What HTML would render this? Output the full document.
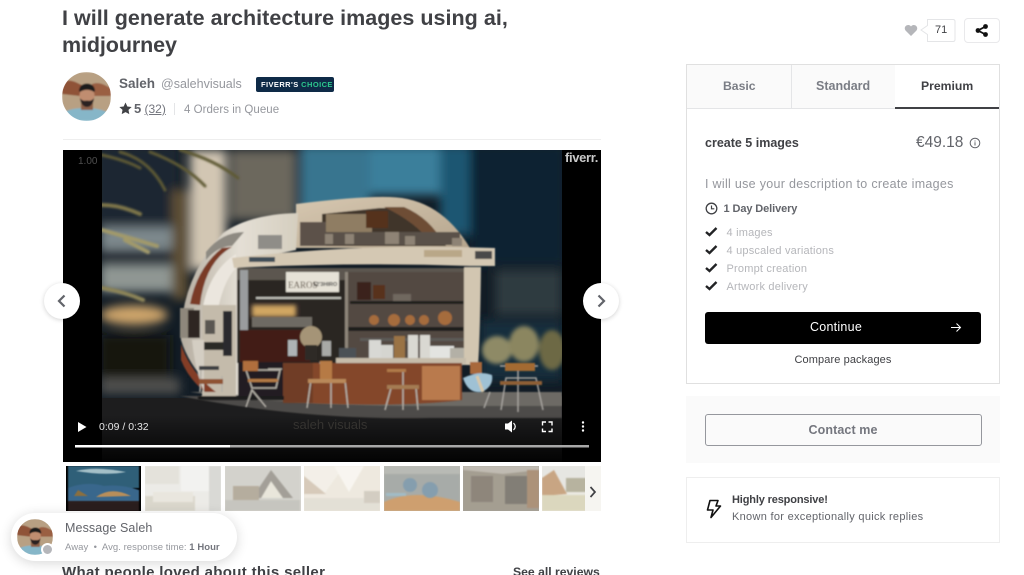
<!DOCTYPE html>
<html><head><meta charset="utf-8">
<style>
html,body{margin:0;padding:0;background:#fff;width:1024px;height:575px;overflow:hidden;font-family:"Liberation Sans",sans-serif}
#w{position:relative;width:1024px;height:575px;overflow:hidden;background:#fff}
.a{position:absolute;white-space:nowrap}
.box{position:absolute;box-sizing:border-box}
svg{position:absolute;overflow:hidden}
.thumb{position:absolute;top:466px;height:45px;width:76px;overflow:hidden}
.thumb svg{filter:blur(.8px);opacity:.85}
</style></head><body><div id="w">
<div class="a" style="left:62px;top:5px;font-size:21.500px;line-height:27px;font-weight:700;color:#404145;letter-spacing:.03px">I will generate architecture images using ai,</div>
<div class="a" style="left:62px;top:32px;font-size:21.500px;line-height:27px;font-weight:700;color:#404145;letter-spacing:-.1px">midjourney</div>

<svg style="left:62px;top:72px" width="49" height="49" viewBox="0 0 49 49"><defs><clipPath id="c1"><circle cx="24.500" cy="24.500" r="24.500"/></clipPath><filter id="b1"><feGaussianBlur stdDeviation=".7"/></filter></defs><g clip-path="url(#c1)" filter="url(#b1)"><rect width="49" height="49" fill="#b8a083"/><path d="M0 10C10 6 16 12 22 14L18 24L0 22Z" fill="#8f5238"/><path d="M30 12C38 9 44 14 49 16V24H32Z" fill="#9a5f42"/><path d="M0 41C8 37 14 36 24 36C34 36 42 38 49 42V49H0Z" fill="#86b6c8"/><rect x="19" y="30" width="12" height="8" fill="#8d6048"/><ellipse cx="25" cy="24" rx="7.500" ry="10" fill="#c08d70"/><path d="M17 19C17 9 33 9 33 19L32 20C28 17 22 17 18 20Z" fill="#1e1a1c"/><path d="M18 26C19 38 31 38 32 26C30 29 27 29 25 28.500C23 29 20 29 18 26Z" fill="#2a2123"/></g></svg>

<div class="a" style="left:119px;top:75px;font-size:13.500px;line-height:18px;font-weight:700;color:#62646a">Saleh</div>
<div class="a" style="left:161px;top:76px;font-size:12.500px;line-height:17px;color:#95979d">@salehvisuals</div>
<div class="box" style="left:256px;top:77px;width:78px;height:15px;background:#0e2a47;border-radius:2px"></div>
<div class="a" style="left:261px;top:79px;font-size:7.500px;line-height:11px;font-weight:700;color:#fff;letter-spacing:.42px">FIVERR'S <span style="color:#2cc78d">CHOICE</span></div>

<svg style="left:119px;top:102px" width="13" height="13" viewBox="0 0 24 24"><path d="M12 1l3.400 7.200 7.900 1-5.800 5.400 1.500 7.800L12 18.600 5 22.400l1.500-7.800L.7 9.200l7.900-1z" fill="#404145"/></svg>
<div class="a" style="left:134px;top:101px;font-size:13px;line-height:16px;font-weight:700;color:#62646a">5</div>
<div class="a" style="left:144.500px;top:101px;font-size:12px;line-height:16px;color:#74767e;text-decoration:underline">(32)</div>
<div class="box" style="left:174px;top:103px;width:1px;height:12px;background:#e4e5e7"></div>
<div class="a" style="left:184px;top:103px;font-size:11.500px;line-height:15px;color:#95979d;letter-spacing:.03px">4 Orders in Queue</div>

<div class="box" style="left:63px;top:139px;width:538px;height:1px;background:#eeeeee"></div>

<svg style="left:63px;top:150px" width="538" height="312" viewBox="63 150 538 312">
<defs>
<filter id="bl" x="-20%" y="-20%" width="140%" height="140%"><feGaussianBlur stdDeviation="5"/></filter>
<filter id="bs" x="-20%" y="-20%" width="140%" height="140%"><feGaussianBlur stdDeviation="2"/></filter>
<filter id="bf" x="-20%" y="-20%" width="140%" height="140%"><feGaussianBlur stdDeviation="1"/></filter>
<filter id="bt" x="-20%" y="-20%" width="140%" height="140%"><feGaussianBlur stdDeviation=".8"/></filter>
<linearGradient id="fade" x1="0" y1="0" x2="0" y2="1"><stop offset="0" stop-color="#000" stop-opacity="0"/><stop offset="1" stop-color="#000" stop-opacity=".9"/></linearGradient>
<linearGradient id="dome" x1="0" y1="0" x2="1" y2="1"><stop offset="0" stop-color="#d6c7b0"/><stop offset="1" stop-color="#b5a58d"/></linearGradient>
<linearGradient id="bodyg" x1="0" y1="0" x2="1" y2="0"><stop offset="0" stop-color="#b5ada0"/><stop offset=".5" stop-color="#e4dfd5"/><stop offset="1" stop-color="#d5cebf"/></linearGradient>
</defs>
<rect x="63" y="150" width="538" height="312" fill="#000"/>
<g>
<rect x="102" y="150" width="460" height="312" fill="#121c25"/>
<g filter="url(#bl)">
<rect x="95" y="145" width="85" height="78" fill="#1b2730"/>
<rect x="100" y="226" width="72" height="24" fill="#7d888c"/>
<rect x="100" y="250" width="72" height="10" fill="#151f2c"/>
<rect x="100" y="264" width="72" height="28" fill="#8f9693"/>
<rect x="172" y="190" width="16" height="110" fill="#5f4f36"/>
<rect x="190" y="150" width="36" height="120" fill="#d2c6b3"/>
<rect x="230" y="150" width="66" height="70" fill="#6c675d"/>
<rect x="300" y="145" width="70" height="70" fill="#37758f"/>
<rect x="370" y="145" width="70" height="50" fill="#3a7f9b"/>
<rect x="440" y="145" width="30" height="90" fill="#1b5772"/>
<rect x="470" y="145" width="95" height="120" fill="#0f2230"/>
<rect x="495" y="270" width="67" height="45" fill="#2f3b40"/>
<rect x="480" y="320" width="82" height="60" fill="#152d3d"/>
<ellipse cx="134" cy="315" rx="34" ry="10" fill="#cda46a"/>
<rect x="100" y="335" width="70" height="45" fill="#191511"/>
<rect x="100" y="378" width="80" height="16" fill="#4f4f4e"/>
</g>
<g filter="url(#bf)" fill="none" stroke-linecap="round">
<path d="M102 155Q125 160 140 168M120 152Q150 160 165 190M150 152Q185 165 205 186M180 150Q215 160 238 178" stroke="#5f5a34" stroke-width="3"/>
<path d="M102 205Q120 205 140 214" stroke="#7d7548" stroke-width="4"/>
<path d="M102 230Q130 238 157 246M125 240L148 252" stroke="#a29a6a" stroke-width="4"/>
<path d="M102 288Q125 292 143 300" stroke="#8c8459" stroke-width="4"/>
</g>
<g filter="url(#bs)">
<ellipse cx="497" cy="350" rx="15" ry="14" fill="#8e8a66"/>
<ellipse cx="524" cy="344" rx="15" ry="18" fill="#8b8660"/>
<ellipse cx="552" cy="350" rx="13" ry="20" fill="#6d6945"/>
</g>
<rect x="102" y="398" width="460" height="64" fill="#1d1d1e"/>
<path d="M180 396H562V418H430C350 420 260 412 180 396Z" fill="#4e4c48" filter="url(#bt)"/>
<path d="M190 392H562V406H400Q280 404 190 392Z" fill="#6d6b65" filter="url(#bt)"/>
<g filter="url(#bt)">
<!-- dome right -->
<path d="M296 204Q360 196 390 197Q440 198 470 248H296Z" fill="url(#dome)"/>
<path d="M322 214L380 208H402Q432 222 446 246H322Z" fill="#3f342b"/>
<path d="M384 207H404Q430 218 444 244H432Q416 222 384 207Z" fill="#6e4e34"/>
<rect x="326" y="214" width="46" height="18" fill="#8f7d63"/>
<rect x="366" y="211" width="22" height="17" fill="#54331f"/>
<rect x="300" y="232" width="160" height="13" fill="#5a5148"/>
<rect x="300" y="222" width="26" height="24" fill="#5b5148"/>
<g fill="#8e8374"><rect x="325" y="234" width="8" height="10"/><rect x="345" y="234" width="9" height="10"/><rect x="385" y="232" width="14" height="12"/><rect x="405" y="236" width="10" height="9"/><rect x="452" y="238" width="10" height="8"/></g>
<!-- left body -->
<path d="M181 340Q180 280 223 233Q250 214 298 213L296 250L238 262V395H220Q190 370 181 340Z" fill="url(#bodyg)"/>
<path d="M206 252Q222 232 244 232L232 246Q218 246 206 260Z" fill="#8e8a82"/>
<path d="M190 304Q197 268 222 248L232 247Q205 262 200 305Z" fill="#7a3b25"/>
<path d="M202 312Q208 272 236 254L236 268Q222 282 216 320L202 320Z" fill="#ebe6de"/>
<rect x="180" y="308" width="14" height="30" fill="#8e877c"/>
<rect x="188" y="310" width="12" height="28" fill="#2d2824"/>
<rect x="202" y="305" width="34" height="92" fill="#c4bbab"/>
<rect x="223" y="311" width="9" height="45" fill="#2a2a2d"/>
<rect x="205" y="320" width="10" height="14" fill="#5a5751"/>
<rect x="203" y="342" width="20" height="8" fill="#2c2a28"/>
<path d="M181 344Q190 372 216 392H205Q188 378 181 360Z" fill="#833d26"/>
<path d="M192 340H204V392Q195 370 192 340Z" fill="#d4cec3"/>
<rect x="258" y="235" width="24" height="14" fill="#8f8d88"/>
<!-- roof band -->
<path d="M232 258Q360 243 495 248L495 266H470Q350 262 234 268Z" fill="#d4c8b3"/>
<rect x="424" y="250" width="38" height="7" fill="#b9a788"/>
<rect x="475" y="251" width="17" height="8" fill="#4a4a48"/>
<rect x="249" y="257" width="26" height="5" fill="#3f4e58"/>
<!-- windows -->
<rect x="237" y="268" width="234" height="95" fill="#2c2524"/>
<rect x="237" y="268" width="234" height="12" fill="#5b5750"/>
<rect x="345" y="272" width="124" height="88" fill="#524a42"/>
<rect x="252" y="305" width="44" height="12" fill="#d0a662" filter="url(#bs)"/>
<rect x="252" y="317" width="60" height="10" fill="#6e6a64"/>
<rect x="240" y="330" width="70" height="32" fill="#431f18"/>
<rect x="240" y="270" width="8" height="60" fill="#9a9c9e"/>
<rect x="256" y="297" width="85" height="2" fill="#bfc0b8"/>
<rect x="286" y="272" width="53" height="20" fill="#e6e2d7"/>
<text x="288" y="288" font-family="Liberation Serif,serif" font-size="9" fill="#4a3a2c">EAROS</text>
<text x="313" y="286" font-family="Liberation Sans,sans-serif" font-size="5.500" font-weight="700" fill="#3a3a3a">12'3HIRO</text>
<rect x="350" y="301" width="125" height="3" fill="#1e1c1b"/>
<rect x="346" y="327" width="126" height="4" fill="#1e1c1b"/>
<rect x="360" y="338" width="108" height="3" fill="#5c5a57"/>
<rect x="345" y="272" width="3" height="90" fill="#8e867a"/>
<g fill="#a56c3c"><circle cx="374" cy="320" r="5"/><circle cx="394" cy="320" r="6"/><circle cx="410" cy="320" r="5"/><circle cx="424" cy="320" r="5"/><circle cx="445" cy="318" r="7"/></g>
<rect x="357" y="282" width="14" height="18" fill="#3a241c"/><rect x="373" y="285" width="12" height="14" fill="#59311f"/>
<rect x="393" y="294" width="18" height="7" fill="#70685f"/>
<circle cx="311" cy="337" r="11" fill="#a59477"/>
<rect x="305" y="345" width="12" height="15" fill="#2d2b28"/>
<rect x="288" y="340" width="9" height="16" fill="#aeb3b5"/><rect x="322" y="341" width="9" height="15" fill="#a8a9a6"/>
<rect x="339" y="348" width="17" height="12" fill="#4c5156"/><rect x="369" y="340" width="12" height="20" fill="#d8d8d4"/><rect x="381" y="345" width="12" height="14" fill="#d5d5d0"/>
<rect x="394" y="336" width="11" height="22" fill="#9a7344"/><rect x="408" y="335" width="10" height="24" fill="#d9d8d2"/><rect x="420" y="335" width="10" height="24" fill="#d9d8d2"/><rect x="430" y="346" width="24" height="14" fill="#e3e4e1"/><rect x="450" y="348" width="16" height="12" fill="#b3b0a6"/>
<!-- right column -->
<path d="M464 267H481Q480 340 478 365H464Z" fill="#d2c6b1"/>
<!-- counter -->
<rect x="336" y="358" width="130" height="7" fill="#c6bcaa"/>
<path d="M283 363H462L462 400Q400 408 283 402Z" fill="#84462c"/>
<rect x="422" y="366" width="38" height="34" fill="#b97a4e"/>
<rect x="283" y="363" width="30" height="40" fill="#6f3d27"/>
<rect x="238" y="362" width="45" height="34" fill="#211f20"/>
<rect x="198" y="396" width="86" height="4" fill="#1d1c1c"/>
<!-- chairs -->
<g stroke="#b5b1a8" stroke-width="1.500" fill="none">
<path d="M200 392L201 368M222 392V376M246 407L252 390L266 407M268 369H282"/>
<path d="M246 370H280L276 388H252Z"/>
<path d="M307 408L311 380H345L348 408M331 380V408M320 362L325 378"/>
<path d="M385 410L391 388H416L418 410M403 370V410"/>
</g>
<rect x="199" y="379" width="24" height="5" fill="#8f5233"/><rect x="199" y="366" width="20" height="4" fill="#3c4143"/>
<rect x="248" y="379" width="30" height="3" fill="#b47a45"/><rect x="243" y="361" width="15" height="10" fill="#b06e3c"/>
<rect x="308" y="379" width="38" height="4" fill="#b9895a"/><rect x="320" y="361" width="12" height="18" fill="#b67a45"/>
<rect x="387" y="385" width="32" height="4" fill="#a47c52"/><rect x="387" y="369" width="19" height="3" fill="#b07a4a"/>
<rect x="470" y="362" width="12" height="12" fill="#a8683a"/>
<path d="M463 378Q480 370 492 375Q494 386 482 392Q468 394 463 378Z" fill="#9fc1d4"/>
<path d="M477 376L483 392" stroke="#d9c7a8" stroke-width="3"/>
<g stroke="#a8a5a0" stroke-width="1.500" fill="none"><path d="M500 366H538M518 367V412M501 410L506 378H536L543 410M484 408L490 392"/></g>
<rect x="505" y="363" width="30" height="8" fill="#a36a33"/><rect x="500" y="381" width="42" height="4" fill="#8f5f34"/>
</g>
</g>
<rect x="102" y="415" width="460" height="47" fill="url(#fade)"/>
<rect x="63" y="150" width="39" height="312" fill="#000"/>
<rect x="562" y="150" width="39" height="312" fill="#000"/>
<text x="78" y="164" font-family="Liberation Sans,sans-serif" font-size="10" fill="#4e4e4e">1.00</text>
<text x="565" y="162" font-family="Liberation Sans,sans-serif" font-size="13" font-weight="700" fill="#c9c9c9" letter-spacing="-.35">fiverr.</text>
<text x="293" y="429" font-family="Liberation Sans,sans-serif" font-size="13" fill="#353330">saleh visuals</text>
<path d="M78 422L86.500 427L78 432Z" fill="#fff"/>
<text x="99" y="430" font-family="Liberation Sans,sans-serif" font-size="10.500" fill="#e6e6e6">0:09 / 0:32</text>
<rect x="75" y="445" width="514" height="2.500" fill="#a8a8a8"/>
<rect x="75" y="445" width="155" height="2.500" fill="#fff"/>
<path d="M505 423.500H508L512 420.500V432.500L508 429.500H505Z" fill="#fff"/>
<path d="M513.500 423Q517 426.500 513.500 430" stroke="#fff" stroke-width="1.200" fill="none"/>
<path d="M542.500 425.500V422H546M548.500 422H552V425.500M552 428.500V431.500H548.500M546 431.500H542.500V428.500" stroke="#fff" stroke-width="1.400" fill="none"/>
<g fill="#fff"><circle cx="583" cy="422.500" r="1.200"/><circle cx="583" cy="426.500" r="1.200"/><circle cx="583" cy="430.500" r="1.200"/></g>
</svg>

<div class="box" style="left:44px;top:283px;width:36px;height:36px;border-radius:50%;background:#fff;box-shadow:0 1px 5px rgba(0,0,0,.18)"></div>
<svg style="left:44px;top:283px" width="36" height="36" viewBox="0 0 36 36"><path d="M20.500 12.500L15 18L20.500 23.500" stroke="#62646a" stroke-width="2.200" fill="none"/></svg>
<div class="box" style="left:583px;top:283px;width:36px;height:36px;border-radius:50%;background:#fff;box-shadow:0 1px 5px rgba(0,0,0,.18)"></div>
<svg style="left:583px;top:283px" width="36" height="36" viewBox="0 0 36 36"><path d="M15.500 12.500L21 18L15.500 23.500" stroke="#62646a" stroke-width="2.200" fill="none"/></svg>

<div class="thumb" style="left:66px;width:75px;background:#000"><svg style="filter:blur(.5px);opacity:1" width="75" height="45" viewBox="0 0 75 45"><rect x="2" width="71" height="22" fill="#2f5f78"/><path d="M10 5Q30 0 60 6Q40 10 10 5Z" fill="#a5c0c8"/><path d="M2 22Q20 15 38 20Q55 18 73 24V35H2Z" fill="#39678c"/><path d="M30 31Q45 20 65 30Z" fill="#b88e5a"/><path d="M12 24L22 30L8 30Z" fill="#8b6f3f"/><rect x="2" y="35" width="71" height="10" fill="#2a1e1e"/></svg></div>
<div class="thumb" style="left:145px;background:#ecebe7"><svg width="76" height="45" viewBox="0 0 76 45"><rect width="34" height="18" fill="#e3e1d9"/><rect x="36" width="30" height="25" fill="#f4f4f2"/><rect x="64" width="12" height="45" fill="#d6d6d2"/><path d="M0 30H50V45H0Z" fill="#d8d4c8"/><rect x="8" y="26" width="40" height="10" fill="#e9e6dd"/></svg></div>
<div class="thumb" style="left:225px;background:#d8d7d2"><svg width="75" height="45" viewBox="0 0 75 45"><rect width="75" height="45" fill="#d3d2cc"/><path d="M27 32L46 4L68 32Z" fill="#9a968e"/><path d="M36 32L46 15L58 32Z" fill="#ece9dd"/><rect x="8" y="20" width="26" height="14" fill="#b0a695"/><rect y="34" width="75" height="11" fill="#c4c3bc"/></svg></div>
<div class="thumb" style="left:304px;background:#eee9df"><svg width="76" height="45" viewBox="0 0 76 45"><path d="M0 0H40L20 28H0Z" fill="#f4f1ea"/><path d="M0 10L22 28H0Z" fill="#d3c5b4"/><path d="M30 0L45 26L60 0Z" fill="#faf8f3"/><rect y="32" width="76" height="13" fill="#e2dfd5"/><rect x="60" y="25" width="16" height="12" fill="#cfc9be"/></svg></div>
<div class="thumb" style="left:383.500px;background:#bdbcb5"><svg width="76" height="45" viewBox="0 0 76 45"><rect width="76" height="45" fill="#a4a9a6"/><rect y="0" width="76" height="8" fill="#b8bab5"/><path d="M0 36Q30 22 76 36V45H0Z" fill="#d19b63"/><circle cx="26" cy="19" r="7" fill="#7c99ad"/><circle cx="46" cy="24" r="8" fill="#7c99ad"/><rect x="2" y="27" width="20" height="3" fill="#9dbcc9"/></svg></div>
<div class="thumb" style="left:463px;background:#a8a49c"><svg width="76" height="45" viewBox="0 0 76 45"><rect width="76" height="45" fill="#a49d90"/><path d="M0 0H76V4L40 8L0 4Z" fill="#c5c0b6"/><rect x="8" y="10" width="22" height="26" fill="#8a8176"/><rect x="42" y="10" width="22" height="28" fill="#7c7870"/><rect x="64" y="4" width="12" height="38" fill="#ad8f74"/></svg></div>
<div class="thumb" style="left:542px;width:45px;background:#ebe9e2"><svg width="45" height="45" viewBox="0 0 45 45"><rect width="45" height="26" fill="#e6e6e2"/><path d="M0 30V12L12 4L25 28Z" fill="#c39a73"/><rect x="24" y="12" width="21" height="14" fill="#aeaa94"/><rect y="29" width="45" height="16" fill="#d9d5b8"/></svg></div>
<div class="box" style="left:585px;top:466px;width:16px;height:45px;background:#f6f5f1"></div>
<svg style="left:587px;top:484px" width="12" height="16" viewBox="0 0 12 16"><path d="M3.500 3L8 8L3.500 13" stroke="#404145" stroke-width="1.700" fill="none"/></svg>

<div class="a" style="left:62px;top:564px;font-size:15px;line-height:17px;font-weight:700;color:#404145;letter-spacing:.33px">What people loved about this seller</div>
<div class="a" style="left:513px;top:564px;font-size:12.200px;line-height:17px;font-weight:700;color:#404145">See all reviews</div>

<div class="box" style="left:11px;top:513px;width:226px;height:48px;border-radius:24px;background:#fff;box-shadow:0 2px 12px rgba(0,0,0,.16)"></div>
<svg style="left:17px;top:519px" width="36" height="36" viewBox="0 0 49 49"><defs><clipPath id="c2"><circle cx="24.500" cy="24.500" r="24.500"/></clipPath></defs><g clip-path="url(#c2)" filter="url(#b1)"><rect width="49" height="49" fill="#b8a083"/><path d="M0 10C10 6 16 12 22 14L18 24L0 22Z" fill="#8f5238"/><path d="M30 12C38 9 44 14 49 16V24H32Z" fill="#9a5f42"/><path d="M0 41C8 37 14 36 24 36C34 36 42 38 49 42V49H0Z" fill="#86b6c8"/><rect x="19" y="30" width="12" height="8" fill="#8d6048"/><ellipse cx="25" cy="24" rx="7.500" ry="10" fill="#c08d70"/><path d="M17 19C17 9 33 9 33 19L32 20C28 17 22 17 18 20Z" fill="#1e1a1c"/><path d="M18 26C19 38 31 38 32 26C30 29 27 29 25 28.500C23 29 20 29 18 26Z" fill="#2a2123"/></g></svg>
<div class="box" style="left:41px;top:543px;width:13px;height:13px;border-radius:50%;background:#b5b6ba;border:2px solid #fff"></div>
<div class="a" style="left:65px;top:520px;font-size:12.500px;line-height:16px;color:#62646a;letter-spacing:.1px">Message Saleh</div>
<div class="a" style="left:65px;top:541px;font-size:9.500px;line-height:13px;color:#95979d;letter-spacing:.05px">Away &nbsp;•&nbsp; Avg. response time: <span style="font-weight:700;color:#74767e">1 Hour</span></div>

<!-- top right -->
<svg style="left:904px;top:24px" width="14" height="13" viewBox="0 0 14 13"><path d="M7 12L1.500 6.500C-.5 3.500 2 .8 4.500 1C5.500 1 6.500 1.700 7 2.500C7.500 1.700 8.500 1 9.500 1C12 .8 14.500 3.500 12.500 6.500Z" fill="#b5b6ba"/></svg>
<svg style="left:920px;top:18px" width="36" height="25" viewBox="0 0 36 25"><path d="M7.500 1.500H33Q35 1.500 35 3.500V21.500Q35 23.500 33 23.500H7.500V16.500L1 12L7.500 7.500Z" fill="#fff" stroke="#e4e5e7"/></svg>
<div class="a" style="left:935px;top:23px;font-size:11px;line-height:14px;color:#404145">71</div>
<div class="box" style="left:964px;top:18px;width:36px;height:25px;border:1px solid #e9e9eb;border-radius:4px"></div>
<svg style="left:975px;top:24px" width="14" height="13" viewBox="0 0 14 13"><circle cx="10.500" cy="2.500" r="2.400" fill="#111"/><circle cx="3" cy="6.500" r="2.400" fill="#111"/><circle cx="10.500" cy="10.500" r="2.400" fill="#111"/><path d="M10.500 2.500L3 6.500L10.500 10.500" stroke="#111" stroke-width="1.800" fill="none"/></svg>

<!-- pricing card -->
<div class="box" style="left:686px;top:64px;width:314px;height:320px;border:1px solid #e0e0e0;background:#fff"></div>
<div class="box" style="left:687px;top:65px;width:208px;height:44px;background:#fafafa;border-bottom:1px solid #e4e5e7"></div>
<div class="box" style="left:791px;top:65px;width:1px;height:44px;background:#e4e5e7"></div>
<div class="box" style="left:895px;top:107px;width:104px;height:2px;background:#404145"></div>
<div class="a" style="left:723px;top:78px;font-size:12.200px;line-height:16px;font-weight:700;color:#7a7d85">Basic</div>
<div class="a" style="left:816px;top:78px;font-size:12.500px;line-height:16px;font-weight:700;color:#7a7d85">Standard</div>
<div class="a" style="left:921px;top:78px;font-size:12.200px;line-height:16px;font-weight:700;color:#404145">Premium</div>
<div class="a" style="left:705px;top:135px;font-size:12.500px;line-height:16px;font-weight:700;color:#404145">create 5 images</div>
<div class="a" style="left:916px;top:133px;font-size:15.500px;line-height:19px;color:#62646a">€49.18</div>
<svg style="left:969px;top:137px" width="12" height="12" viewBox="0 0 12 12"><circle cx="6" cy="6" r="4.800" stroke="#62646a" fill="none" stroke-width="1"/><path d="M6 5.300V8.500M6 3.500V4.500" stroke="#62646a"/></svg>
<div class="a" style="left:705px;top:176px;font-size:12.500px;line-height:16px;color:#95979d;letter-spacing:.3px">I will use your description to create images</div>
<svg style="left:705px;top:202px" width="13" height="13" viewBox="0 0 13 13"><circle cx="6.500" cy="6.500" r="5.300" stroke="#404145" fill="none" stroke-width="1.300"/><path d="M6.500 3.500V6.800H9.300" stroke="#404145" fill="none" stroke-width="1.200"/></svg>
<div class="a" style="left:723.500px;top:202px;font-size:11px;line-height:15px;font-weight:700;color:#62646a;letter-spacing:-.1px">1 Day Delivery</div>
<svg style="left:705px;top:226px" width="13" height="68" viewBox="0 0 13 68"><g stroke="#222325" stroke-width="2.400" fill="none"><path d="M1 6L4.500 9L11.500 2"/><path d="M1 24L4.500 27L11.500 20"/><path d="M1 42L4.500 45L11.500 38"/><path d="M1 60L4.500 63L11.500 56"/></g></svg>
<div class="a" style="left:726.500px;top:226px;font-size:11px;line-height:15px;color:#b5b6ba;letter-spacing:.2px">4 images</div>
<div class="a" style="left:726.500px;top:244px;font-size:11px;line-height:15px;color:#b5b6ba;letter-spacing:.2px">4 upscaled variations</div>
<div class="a" style="left:726.500px;top:262px;font-size:11px;line-height:15px;color:#b5b6ba;letter-spacing:.2px">Prompt creation</div>
<div class="a" style="left:726.500px;top:280px;font-size:11px;line-height:15px;color:#b5b6ba;letter-spacing:.2px">Artwork delivery</div>
<div class="box" style="left:705px;top:312px;width:276px;height:31.500px;background:#000;border-radius:3px"></div>
<div class="a" style="left:810px;top:319px;font-size:12.500px;line-height:16px;color:#fff;letter-spacing:.25px">Continue</div>
<svg style="left:950px;top:322px" width="12" height="11" viewBox="0 0 12 11"><path d="M1 5.500H10.500M6.500 1.500L10.500 5.500L6.500 9.500" stroke="#fff" fill="none" stroke-width="1"/></svg>
<div class="a" style="left:794.500px;top:353px;font-size:11px;line-height:15px;color:#404145;letter-spacing:.1px">Compare packages</div>

<!-- contact -->
<div class="box" style="left:686px;top:396px;width:314px;height:67px;background:#fafafa"></div>
<div class="box" style="left:704.500px;top:414px;width:277.500px;height:32px;border:1px solid #95979d;border-radius:3px"></div>
<div class="a" style="left:808.500px;top:422px;font-size:12.500px;line-height:16px;font-weight:700;color:#74767e;letter-spacing:.1px">Contact me</div>

<!-- responsive -->
<div class="box" style="left:686px;top:476.500px;width:314px;height:66px;border:1px solid #eeeeee"></div>
<svg style="left:706px;top:499px" width="16" height="20" viewBox="0 0 16 20"><path d="M4 1.500H12L10 7H14.500L5 18.500L7 11H1.500Z" stroke="#111" stroke-width="1.600" fill="none" stroke-linejoin="round"/></svg>
<div class="a" style="left:732px;top:493px;font-size:11px;line-height:15px;font-weight:700;color:#404145;letter-spacing:-.15px">Highly responsive!</div>
<div class="a" style="left:732px;top:510px;font-size:11px;line-height:15px;color:#62646a;letter-spacing:.3px">Known for exceptionally quick replies</div>
</div></body></html>
